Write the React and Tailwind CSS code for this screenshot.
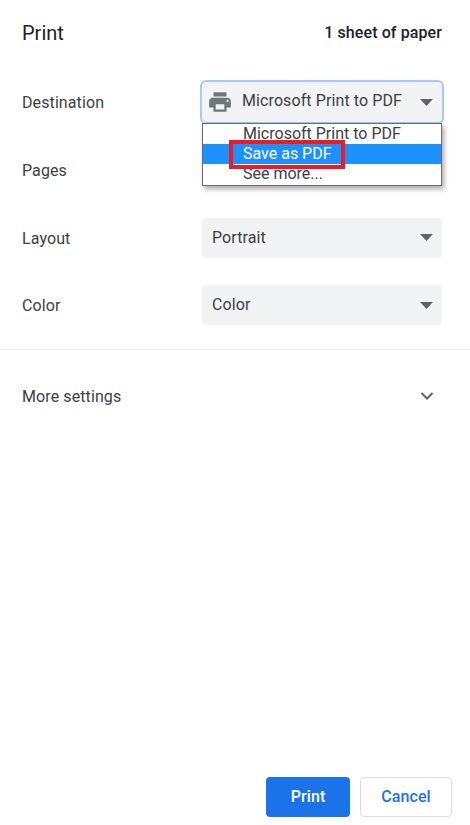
import React from "react";

function Caret() {
  return (
    <svg width="13" height="7" viewBox="0 0 13 7" className="shrink-0">
      <path d="M0 0H13L6.5 7Z" fill="#5f6368" />
    </svg>
  );
}

function PrinterIcon() {
  return (
    <svg width="26" height="26" viewBox="0 0 24 24" className="shrink-0">
      <path
        fill="#70757a"
        d="M19 8H5c-1.66 0-3 1.34-3 3v6h4v4h12v-4h4v-6c0-1.66-1.34-3-3-3zm-3 11H8v-5h8v5zm3-7c-.55 0-1-.45-1-1s.45-1 1-1 1 .45 1 1-.45 1-1 1zm-1-9H6v4h12V3z"
      />
    </svg>
  );
}

function Row({ label, children }) {
  return (
    <div className="flex items-center justify-between h-10">
      <span className="text-[16px] tracking-[0.1px] text-[#3c4043] mt-[2px]">{label}</span>
      {children}
    </div>
  );
}

function Select({ value }) {
  return (
    <div className="w-[240px] h-10 rounded bg-[#f1f3f4] flex items-center justify-between pl-[10px] pr-[9px] text-[16px] tracking-[0.1px] text-[#3c4043]">
      <span>{value}</span>
      <Caret />
    </div>
  );
}

export default function App() {
  return (
    <div className="w-[470px] h-[825px] bg-white flex flex-col overflow-hidden font-['Roboto',sans-serif]">
      <header className="flex items-center justify-between pl-[22px] pr-[28px] pt-[20px] h-[46px]">
        <h1 className="text-[20px] leading-[26px] text-[#202124]">Print</h1>
        <span className="text-[16px] tracking-[0.1px] font-medium text-[#202124]">1 sheet of paper</span>
      </header>

      <div className="flex flex-col gap-[27.6px] pl-[22px] pr-[28px] pt-[36.4px]">
        <Row label="Destination">
          <div className="relative w-[240px] h-10">
            <div className="h-10 rounded outline-2 outline-[#a8c7fa] bg-[#f1f3f4] flex items-center justify-between pl-[5px] pr-[9px] text-[16px] tracking-[0.1px] text-[#3c4043]">
              <div className="flex items-center gap-[9px]">
                <PrinterIcon />
                <span className="-mt-[2px]">Microsoft Print to PDF</span>
              </div>
              <Caret />
            </div>
            <div className="absolute left-0 top-[41px] w-[240px] h-[63px] bg-white border border-[#6b6b6b] shadow-[2px_3px_5px_rgba(0,0,0,0.35)] text-[#3c4043] text-[16px] leading-[20px]">
              <div className="pl-[40px] h-[20px]">Microsoft Print to PDF</div>
              <div className="pl-[40px] h-[20px] bg-[#1e90ff] text-white">Save as PDF</div>
              <div className="pl-[40px] h-[20px]">See more...</div>
              <div className="absolute left-[26px] top-[16px] w-[116px] h-[29px] border-[4px] border-[#ed1c24]" />
            </div>
          </div>
        </Row>
        <Row label="Pages">
          <div className="w-[240px] h-10" />
        </Row>
        <Row label="Layout">
          <Select value="Portrait" />
        </Row>
        <Row label="Color">
          <Select value="Color" />
        </Row>
      </div>

      <div className="mt-[23.8px] h-px bg-[#e8eaed]" />

      <div className="flex items-center justify-between pl-[22px] pr-[35px] mt-[26px] h-10">
        <span className="text-[16px] tracking-[0.1px] text-[#3c4043] mt-[2px]">More settings</span>
        <svg width="16" height="16" viewBox="0 0 16 16" fill="none">
          <path d="M2.5 5L8 10.5L13.5 5" stroke="#5f6368" strokeWidth="2" />
        </svg>
      </div>

      <div className="mt-auto flex justify-end gap-[10px] pr-[18px] pb-[8px]">
        <button className="w-[84px] h-10 rounded bg-[#1a73e8] text-white text-[16px] tracking-[0.1px] font-medium">Print</button>
        <button className="w-[92px] h-10 rounded bg-white border border-[#dadce0] text-[#1a73e8] text-[16px] tracking-[0.1px] font-medium">Cancel</button>
      </div>
    </div>
  );
}
